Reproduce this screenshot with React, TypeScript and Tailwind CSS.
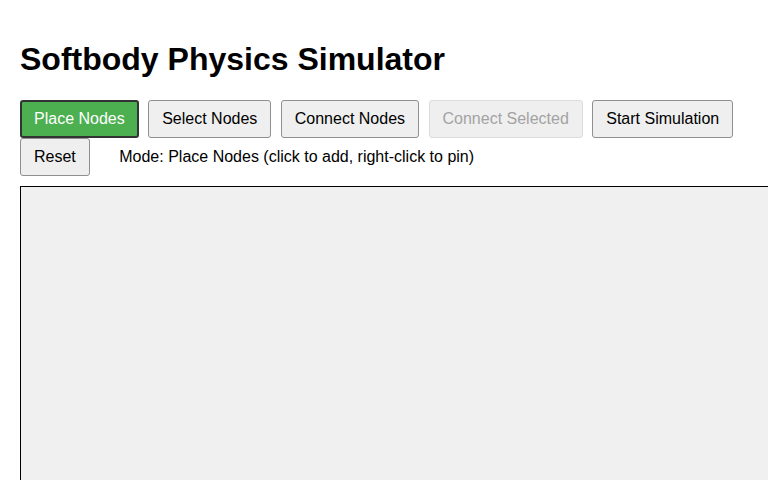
import React, { useState } from 'react'

type Mode = 'place' | 'select' | 'connect'

const MODE_TEXT: Record<Mode, string> = {
  place: 'Place Nodes (click to add, right-click to pin)',
  select: 'Select Nodes (click to select)',
  connect: 'Connect Nodes (click two nodes)',
}

function ToolButton({
  label,
  active,
  disabled,
  onClick,
}: {
  label: string
  active?: boolean
  disabled?: boolean
  onClick?: () => void
}) {
  const base = 'h-[38px] rounded-[3px] text-[16px] leading-[normal] whitespace-nowrap'
  if (active) {
    return (
      <button onClick={onClick} className={`${base} bg-[#4caf50] text-white border-2 border-[#333333] px-[12px]`}>
        {label}
      </button>
    )
  }
  if (disabled) {
    return (
      <button disabled className={`${base} bg-[#efefef] text-[#a3a3a3] border border-[#dcdcdc] px-[13px]`}>
        {label}
      </button>
    )
  }
  return (
    <button onClick={onClick} className={`${base} bg-[#efefef] text-black border border-[#8f8f8f] px-[13px]`}>
      {label}
    </button>
  )
}

export default function App() {
  const [mode, setMode] = useState<Mode>('place')
  const [running, setRunning] = useState(false)

  return (
    <div className="h-screen overflow-hidden bg-white p-5 text-black" style={{ fontFamily: '"Liberation Sans", Arial, sans-serif' }}>
      <h1 className="text-[32px] font-bold leading-[normal] mt-[21.44px] mb-[21.44px]">Softbody Physics Simulator</h1>

      <div className="flex flex-wrap items-center gap-x-[9.45px] w-[728px]">
        <ToolButton label="Place Nodes" active={mode === 'place'} onClick={() => setMode('place')} />
        <ToolButton label="Select Nodes" active={mode === 'select'} onClick={() => setMode('select')} />
        <ToolButton label="Connect Nodes" active={mode === 'connect'} onClick={() => setMode('connect')} />
        <ToolButton label="Connect Selected" disabled />
        <ToolButton label={running ? 'Stop Simulation' : 'Start Simulation'} onClick={() => setRunning(!running)} />
        <ToolButton label="Reset" onClick={() => { setMode('place'); setRunning(false) }} />
        <span className="ml-[20px] text-[16px] leading-[normal]">Mode: {MODE_TEXT[mode]}</span>
      </div>

      <div className="mt-[10px] w-[800px] h-[600px] border border-black bg-[#f0f0f0] shrink-0" />
    </div>
  )
}
